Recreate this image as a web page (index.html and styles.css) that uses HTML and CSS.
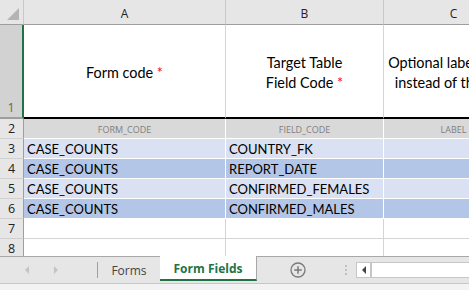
FILE: index.html
```html
<!DOCTYPE html>
<html lang="en">
<head>
    <meta charset="UTF-8">
    <title>Form Fields</title>
    <link rel="stylesheet" href="styles.css">
</head>
<body>

<div class="sheet">
    <!-- encabezados de columna -->
    <div class="corner"><span class="corner-tri"></span></div>
    <div class="col-head">A</div>
    <div class="col-head">B</div>
    <div class="col-head">C</div>

    <!-- fila 1 -->
    <div class="row-head row-head-sel">1</div>
    <div class="cell title"><span>Form code <span class="req">*</span></span></div>
    <div class="cell title"><span>Target Table<br>Field Code <span class="req">*</span></span></div>
    <div class="cell title"><span>Optional label to use<br>instead of the field</span></div>

    <!-- fila 2 -->
    <div class="row-head">2</div>
    <div class="cell code">FORM_CODE</div>
    <div class="cell code">FIELD_CODE</div>
    <div class="cell code">LABEL</div>

    <div class="row-head">3</div>
    <div class="cell light">CASE_COUNTS</div>
    <div class="cell light">COUNTRY_FK</div>
    <div class="cell light"></div>

    <div class="row-head">4</div>
    <div class="cell dark">CASE_COUNTS</div>
    <div class="cell dark">REPORT_DATE</div>
    <div class="cell dark"></div>

    <div class="row-head">5</div>
    <div class="cell light">CASE_COUNTS</div>
    <div class="cell light">CONFIRMED_FEMALES</div>
    <div class="cell light"></div>

    <div class="row-head">6</div>
    <div class="cell dark">CASE_COUNTS</div>
    <div class="cell dark">CONFIRMED_MALES</div>
    <div class="cell dark"></div>

    <div class="row-head">7</div>
    <div class="cell"></div>
    <div class="cell"></div>
    <div class="cell"></div>

    <div class="row-head">8</div>
    <div class="cell"></div>
    <div class="cell"></div>
    <div class="cell"></div>
</div>

<!-- barra de hojas -->
<div class="tabbar">
    <div class="nav">
        <span class="arrow arrow-left"></span>
        <span class="arrow arrow-right"></span>
    </div>
    <div class="tab">Forms</div>
    <div class="tab tab-active">Form Fields</div>
    <div class="add">
        <svg width="16" height="16" viewBox="0 0 16 16">
            <circle cx="8" cy="8" r="7" fill="none" stroke="#7a7a7a" stroke-width="1.3"/>
            <path d="M8 4.2v7.6M4.2 8h7.6" stroke="#7a7a7a" stroke-width="1.5"/>
        </svg>
    </div>
    <div class="dots"><span></span><span></span><span></span></div>
    <div class="hscroll">
        <div class="hscroll-btn"><span class="hscroll-tri"></span></div>
        <div class="hscroll-track"></div>
    </div>
</div>
<div class="status"></div>

</body>
</html>
```

FILE: styles.css
```css
body {
    margin: 0;
    width: 469px;
    height: 290px;
    overflow: hidden;
    background-color: #ffffff;
}
.sheet {
    display: grid;
    grid-template-columns: 24px 202px 158px 140px;
    grid-template-rows: 25px 94px repeat(7, 20px);
    width: 524px;
    height: 256px;
    overflow: hidden;
}
.sheet > div {
    box-sizing: border-box;
}
.corner {
    background-color: #e6e6e6;
    border-right: 1px solid #c8c8c8;
    border-bottom: 1px solid #9e9e9e;
    position: relative;
}
.corner-tri {
    position: absolute;
    right: 4px;
    bottom: 4px;
    width: 0;
    height: 0;
    border-left: 12px solid transparent;
    border-bottom: 12px solid #b4b4b4;
}
.col-head {
    background-color: #e6e6e6;
    border-right: 1px solid #c8c8c8;
    border-bottom: 1px solid #9e9e9e;
    font-family: "Open Sans", sans-serif;
    font-size: 12px;
    color: #222;
    display: flex;
    align-items: center;
    justify-content: center;
    padding-top: 2px;
}
.row-head {
    background-color: #e6e6e6;
    border-right: 1px solid #9e9e9e;
    border-bottom: 1px solid #d0d0d0;
    font-family: "Open Sans", sans-serif;
    font-size: 12.5px;
    color: #222;
    display: flex;
    align-items: center;
    justify-content: center;
}
.row-head-sel {
    background-color: #d2d2d2;
    border-right: 2px solid #217346;
    border-bottom: 2px solid #9e9e9e;
    color: #6b6b2a;
    align-items: flex-end;
    padding-bottom: 1px;
}
.cell {
    border-right: 1px solid #d4d4d4;
    border-bottom: 1px solid #d4d4d4;
    font-family: Lato, "Liberation Sans", sans-serif;
    font-size: 13px;
    color: #000;
    white-space: nowrap;
    overflow: hidden;
    display: flex;
    align-items: center;
    padding-left: 3px;
    padding-top: 1px;
}
.title {
    justify-content: center;
    text-align: center;
    font-size: 14.4px;
    line-height: 20px;
    padding-left: 0;
    padding-top: 3px;
    border-bottom: 2px solid #000;
}
.req {
    color: #ff0000;
}
.code {
    background-color: #d9d9d9;
    border-right: 1px solid #fff;
    border-bottom: 1px solid #fff;
    justify-content: center;
    font-family: "Open Sans", sans-serif;
    font-size: 9px;
    color: #808080;
    padding-left: 0;
}
.light {
    background-color: #d9e1f2;
    border-right: 1px solid #fff;
    border-bottom: 1px solid #fff;
}
.dark {
    background-color: #b4c6e7;
    border-right: 1px solid #fff;
    border-bottom: 1px solid #fff;
}
/* barra de pestañas */
.tabbar {
    display: flex;
    height: 28px;
    box-sizing: border-box;
    background-color: #e6e6e6;
    border-bottom: 1px solid #c6c6c6;
    position: relative;
}
.tabbar::before {
    content: "";
    position: absolute;
    left: 0;
    right: 0;
    top: 0;
    height: 1px;
    background-color: #a8a8a8;
}
.nav {
    width: 98px;
    display: flex;
    align-items: center;
    border-right: 1px solid #a0a0a0;
    margin: 6px 0 5px 0;
    box-sizing: border-box;
}
.arrow {
    width: 0;
    height: 0;
    border-top: 4px solid transparent;
    border-bottom: 4px solid transparent;
}
.arrow-left {
    border-right: 4px solid #c4c4c4;
    margin-left: 25px;
}
.arrow-right {
    border-left: 4px solid #c4c4c4;
    margin-left: 25px;
}
.tab {
    width: 62px;
    display: flex;
    align-items: center;
    justify-content: center;
    font-family: "Open Sans", sans-serif;
    font-size: 12px;
    color: #444;
    padding-top: 1px;
}
.tab-active {
    width: 96px;
    background-color: #fff;
    color: #217346;
    font-weight: bold;
    border-right: 1px solid #a8a8a8;
    border-bottom: 2px solid #217346;
    margin-bottom: 2px;
    position: relative;
    z-index: 1;
}
.add {
    width: 82px;
    display: flex;
    align-items: center;
    justify-content: center;
    padding-top: 1px;
}
.dots {
    width: 14px;
    display: flex;
    flex-direction: column;
    align-items: center;
    justify-content: center;
    gap: 2px;
}
.dots span {
    width: 2px;
    height: 2px;
    background-color: #c0c0c0;
}
.hscroll {
    flex: 1;
    display: flex;
    margin: 6px 0 5px 3px;
    border: 1px solid #c6c6c6;
    border-right: none;
    background-color: #fff;
}
.hscroll-btn {
    width: 13px;
    display: flex;
    align-items: center;
    justify-content: center;
    border-right: 2px solid #c6c6c6;
}
.hscroll-tri {
    width: 0;
    height: 0;
    border-top: 4px solid transparent;
    border-bottom: 4px solid transparent;
    border-right: 4px solid #444;
}
.hscroll-track {
    flex: 1;
}
.status {
    height: 6px;
    background-color: #f3f3f3;
}
```
